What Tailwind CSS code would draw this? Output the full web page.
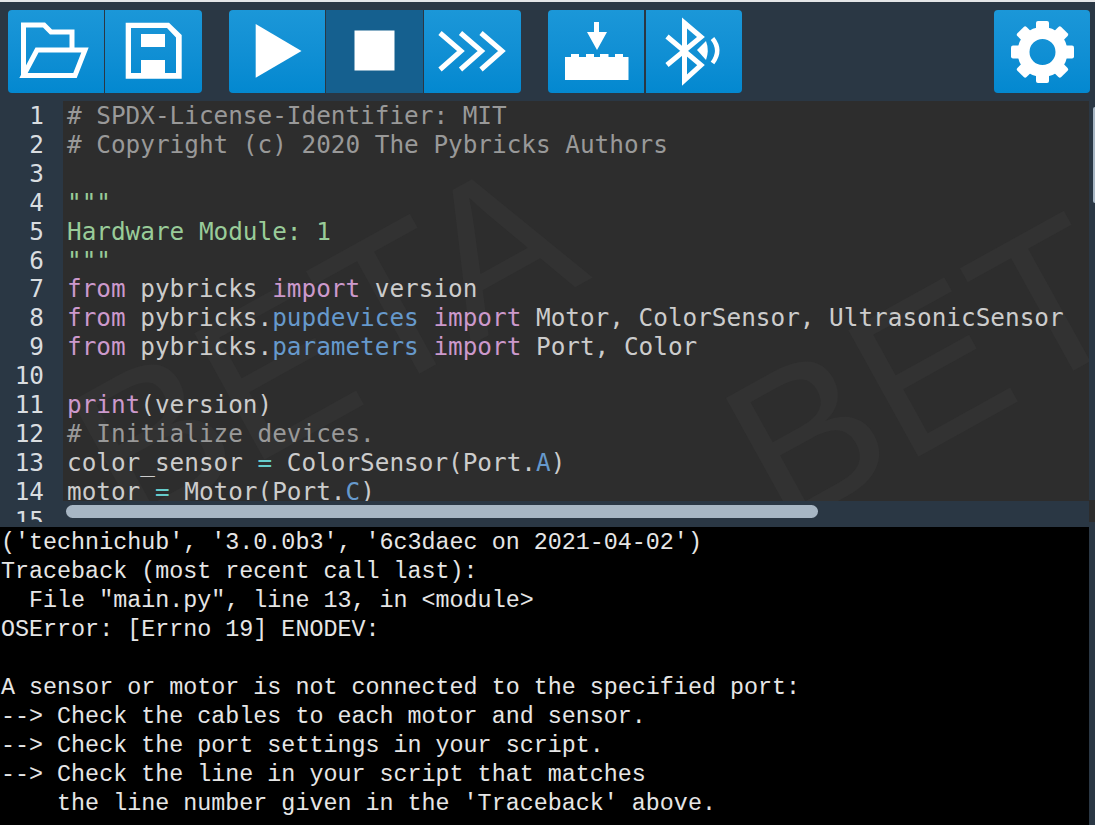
<!DOCTYPE html>
<html lang="en">
<head>
  <meta charset="UTF-8" />
  <title>Pybricks Code</title>
  <script src="https://cdn.jsdelivr.net/npm/@tailwindcss/browser@4"></script>
</head>
<body class="bg-[#2a3744]">
  <div class="w-[1095px] h-[825px] overflow-hidden flex flex-col bg-[#2a3744] border-t-2 border-[#e4e6e8]">

    <!-- Toolbar -->
    <div class="h-[99px] shrink-0 flex items-start pt-[8px] pl-[8px]">
      <div class="flex gap-px">
        <button class="w-[96px] h-[83px] rounded-l-[4px] bg-gradient-to-b from-[#1b97d8] to-[#0388d0]">
          <svg viewBox="8 10 96 83" class="w-full h-full" fill="none" stroke="white" stroke-width="5">
            <path d="M23.5 75 V25 H44 L51 32 H72 V50" />
            <path d="M37 50 H85 L75 75.5 H23.5 Z" />
          </svg>
        </button>
        <button class="w-[97px] h-[83px] rounded-r-[4px] bg-gradient-to-b from-[#1b97d8] to-[#0388d0]">
          <svg viewBox="105 10 97 83" class="w-full h-full" fill="white">
            <path fill-rule="evenodd" d="M125.700 22.700 H169 L181.700 35 V78.700 H125.700 Z M131 28 V73 H141 V60 H165 V73 H176 V37.500 L167 28 Z M141 34 H165 V47 H141 Z" />
          </svg>
        </button>
      </div>

      <div class="flex gap-px ml-[27px]">
        <button class="w-[96px] h-[83px] rounded-l-[4px] bg-gradient-to-b from-[#1b97d8] to-[#0388d0]">
          <svg viewBox="229 10 96 83" class="w-full h-full" fill="white">
            <path d="M255.700 24 L301.500 51 L255.700 77.700 Z" />
          </svg>
        </button>
        <button class="w-[97px] h-[83px] bg-[#15608f]">
          <svg viewBox="326 10 97 83" class="w-full h-full" fill="white">
            <rect x="354.500" y="30.500" width="40" height="40" />
          </svg>
        </button>
        <button class="w-[97px] h-[83px] rounded-r-[4px] bg-gradient-to-b from-[#1b97d8] to-[#0388d0]">
          <svg viewBox="424 10 97 83" class="w-full h-full" fill="none" stroke="white" stroke-width="5">
            <path d="M440 33 L461 51 L440 69.500" />
            <path d="M460.500 33 L481.500 51 L460.500 69.500" />
            <path d="M481 33 L502 51 L481 69.500" />
          </svg>
        </button>
      </div>

      <div class="flex gap-[2px] ml-[27px]">
        <button class="w-[96px] h-[83px] rounded-l-[4px] bg-gradient-to-b from-[#1b97d8] to-[#0388d0]">
          <svg viewBox="548 10 96 83" class="w-full h-full" fill="white">
            <path d="M594 22 H599 V32 H607 L597 50 L587 32 H594 Z" />
            <path d="M565 57 H571 V54 H579 V57 H586 V54 H594 V57 H600 V54 H608.500 V57 H615 V54 H623 V57 H628.500 V80 H565 Z" />
          </svg>
        </button>
        <button class="w-[96px] h-[83px] rounded-r-[4px] bg-gradient-to-b from-[#1b97d8] to-[#0388d0]">
          <svg viewBox="646 10 96 83" class="w-full h-full" fill="none" stroke="white" stroke-width="5">
            <path d="M667 36.500 L701 65 L684.500 80 V23 L701 37 L667 65" />
            <path d="M697 50 L706 41 Q709.500 50.500 706 60 Z" fill="white" stroke="none" />
            <path d="M712.500 38.500 Q722 50.500 712.500 63" stroke-width="4.500" />
          </svg>
        </button>
      </div>

      <button class="w-[96px] h-[83px] ml-[252px] rounded-[4px] bg-gradient-to-b from-[#1b97d8] to-[#0388d0]">
        <svg viewBox="994 10 96 83" class="w-full h-full" fill="white">
          <circle cx="1042.500" cy="52" r="19" fill="none" stroke="white" stroke-width="12" />
          <g>
            <rect x="1036" y="21" width="13" height="14" rx="2" />
            <rect x="1036" y="69" width="13" height="14" rx="2" />
            <rect x="1011" y="45.500" width="14" height="13" rx="2" />
            <rect x="1060" y="45.500" width="14" height="13" rx="2" />
            <rect x="1036" y="21" width="13" height="14" rx="2" transform="rotate(45 1042.500 52)" />
            <rect x="1036" y="21" width="13" height="14" rx="2" transform="rotate(135 1042.500 52)" />
            <rect x="1036" y="21" width="13" height="14" rx="2" transform="rotate(225 1042.500 52)" />
            <rect x="1036" y="21" width="13" height="14" rx="2" transform="rotate(315 1042.500 52)" />
          </g>
        </svg>
      </button>
    </div>

    <!-- Editor -->
    <div class="h-[426px] shrink-0 flex overflow-hidden font-['DejaVu_Sans_Mono',monospace] text-[24.35px] leading-[28.9px]">
      <div class="w-[63px] h-[421px] overflow-hidden shrink-0 pt-[1px] pr-[19px] text-right text-[#d9dde0]">
        <div>1</div><div>2</div><div>3</div><div>4</div><div>5</div>
        <div>6</div><div>7</div><div>8</div><div>9</div><div>10</div>
        <div>11</div><div>12</div><div>13</div><div>14</div><div>15</div>
      </div>

      <div class="w-[1026px] shrink-0 flex flex-col">
        <div class="relative h-[400px] overflow-hidden bg-[#2d2d2d]">
          <!-- watermark -->
          <span class="absolute left-[-22px] top-[280px] origin-top-left -rotate-[29deg] font-['Liberation_Sans',sans-serif] text-[210px] leading-[210px] text-[#323232]">BETA</span>
          <span class="absolute left-[632px] top-[277px] origin-top-left -rotate-[29deg] font-['Liberation_Sans',sans-serif] text-[210px] leading-[210px] text-[#323232]">BETA</span>

          <pre class="relative pt-[1px] pl-[4px] font-['DejaVu_Sans_Mono',monospace] text-[#cccccc]"><span class="text-[#999999]"># SPDX-License-Identifier: MIT</span>
<span class="text-[#999999]"># Copyright (c) 2020 The Pybricks Authors</span>

<span class="text-[#99cc99]">"""</span>
<span class="text-[#99cc99]">Hardware Module: 1</span>
<span class="text-[#99cc99]">"""</span>
<span class="text-[#cc99cc]">from</span> pybricks <span class="text-[#cc99cc]">import</span> version
<span class="text-[#cc99cc]">from</span> pybricks.<span class="text-[#6699cc]">pupdevices</span> <span class="text-[#cc99cc]">import</span> Motor, ColorSensor, UltrasonicSensor
<span class="text-[#cc99cc]">from</span> pybricks.<span class="text-[#6699cc]">parameters</span> <span class="text-[#cc99cc]">import</span> Port, Color

<span class="text-[#cc99cc]">print</span>(version)
<span class="text-[#999999]"># Initialize devices.</span>
color_sensor <span class="text-[#66cccc]">=</span> ColorSensor(Port.<span class="text-[#6699cc]">A</span>)
motor <span class="text-[#66cccc]">=</span> Motor(Port.<span class="text-[#6699cc]">C</span>)</pre>
        </div>
        <div class="h-[26px] pt-[4px] pl-[3px]">
          <div class="w-[752px] h-[13px] rounded-full bg-[#a7b6c4]"></div>
        </div>
      </div>

      <div class="w-[6px] shrink-0 relative">
        <div class="absolute left-[4px] top-[6px] w-[2px] h-[96px] rounded-l-full bg-[#a7b6c4]"></div>
        <div class="absolute left-0 top-[399px] w-[6px] h-[22px] bg-[#2d2d2d]"></div>
      </div>
    </div>

    <!-- Terminal -->
    <div class="flex-1 w-[1089px] bg-black overflow-hidden pt-[2px]">
      <pre class="pl-[1px] font-['Liberation_Mono',monospace] text-[23.36px] leading-[29px] text-[#e6e6e6]">('technichub', '3.0.0b3', '6c3daec on 2021-04-02')
Traceback (most recent call last):
  File "main.py", line 13, in &lt;module&gt;
OSError: [Errno 19] ENODEV:

A sensor or motor is not connected to the specified port:
--&gt; Check the cables to each motor and sensor.
--&gt; Check the port settings in your script.
--&gt; Check the line in your script that matches
    the line number given in the 'Traceback' above.</pre>
    </div>
  </div>
</body>
</html>
